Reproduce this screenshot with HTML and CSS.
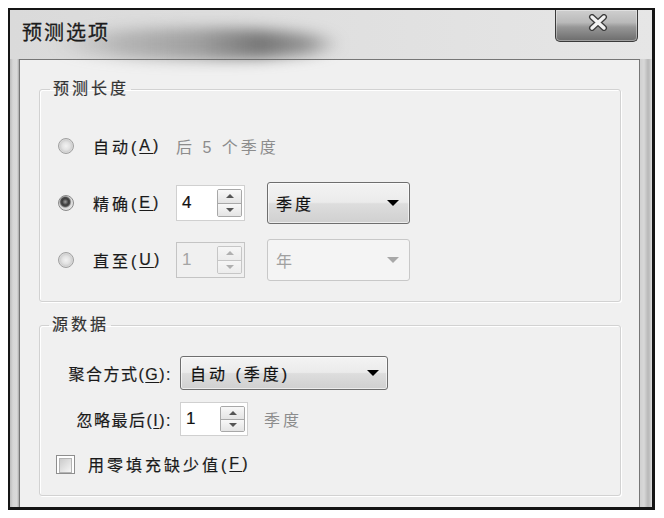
FILE: index.html
```html
<!DOCTYPE html>
<html lang="zh-CN">
<head>
<meta charset="utf-8">
<title>预测选项</title>
<link rel="stylesheet" href="styles.css">
</head>
<body>
<div class="window">
  <div class="titlebar">
    <span class="glow"></span>
    <span class="title">预测选项</span>
    <div class="close">
      <svg width="20" height="17" viewBox="0 0 20 17">
        <path d="M4 3 L16 14 M16 3 L4 14" stroke="#3c3c3c" stroke-width="6" stroke-linecap="round"/>
        <path d="M4 3 L16 14 M16 3 L4 14" stroke="#f2f2f2" stroke-width="3.4" stroke-linecap="round"/>
      </svg>
    </div>
  </div>
  <div class="frame">
    <div class="client">
      <fieldset class="group g1">
        <legend>预测长度</legend>
        <div class="rows">
          <div class="row">
            <label class="opt"><span class="radio"></span>自动(<u>A</u>)</label>
            <span class="hint">后 5 个季度</span>
          </div>
          <div class="row">
            <label class="opt"><span class="radio on"></span>精确(<u>E</u>)</label>
            <div class="spin s1">
              <span class="val">4</span>
              <span class="btns"><span class="up"></span><span class="dn"></span></span>
            </div>
            <div class="combo c1"><span class="ctext">季度</span><span class="arrow"></span></div>
          </div>
          <div class="row">
            <label class="opt"><span class="radio"></span>直至(<u>U</u>)</label>
            <div class="spin s1 off">
              <span class="val">1</span>
              <span class="btns"><span class="up"></span><span class="dn"></span></span>
            </div>
            <div class="combo c1 off"><span class="ctext">年</span><span class="arrow"></span></div>
          </div>
        </div>
      </fieldset>
      <fieldset class="group g2">
        <legend>源数据</legend>
        <div class="form">
          <label class="flabel">聚合方式(<u>G</u>):</label>
          <div class="combo c2"><span class="ctext">自动 (季度)</span><span class="arrow"></span></div>
          <label class="flabel">忽略最后(<u>I</u>):</label>
          <div class="spinwrap">
            <div class="spin s2">
              <span class="val">1</span>
              <span class="btns"><span class="up"></span><span class="dn"></span></span>
            </div>
            <span class="unit">季度</span>
          </div>
          <label class="checkrow"><span class="check"></span>用零填充缺少值(<u>F</u>)</label>
        </div>
      </fieldset>
    </div>
  </div>
</div>
</body>
</html>
```
FILE: styles.css
```css
* { box-sizing: border-box; }
html, body { background: #fff; }
body {
  margin: 8px;
  font-family: "Liberation Sans", "Noto Sans CJK SC", sans-serif;
  color: #1a1a1a;
  -webkit-text-stroke: 0.2px;
}
.window {
  width: 647px;
  height: 502px;
  border: solid #151515;
  border-width: 2px 3px 3px 2px;
  display: flex;
  flex-direction: column;
  background: linear-gradient(180deg, #e3e3e3 0, #dbdbdb 60px, #d9d9d9 100%);
  overflow: hidden;
}
.titlebar {
  height: 49px;
  flex: none;
  position: relative;
  display: flex;
  align-items: flex-start;
  padding-left: 12px;
  background: linear-gradient(90deg, #dadada 0%, #dedede 40%, #e6e6e6 100%);
}
.glow {
  position: absolute;
  left: 42px;
  top: 18px;
  width: 290px;
  height: 32px;
  border-radius: 50%;
  background: linear-gradient(90deg, rgba(120,120,120,0) 0%, rgba(120,120,120,.4) 25%, rgba(110,110,110,.55) 50%, rgba(100,100,100,.85) 72%, rgba(100,100,100,.6) 88%, rgba(100,100,100,0) 100%);
  filter: blur(7px);
}
.title {
  position: relative;
  font-size: 20px;
  line-height: 26px;
  letter-spacing: 2px;
  margin-top: 10px;
  color: #1c1c1c;
  -webkit-text-stroke: 0.3px;
}
.close {
  margin-left: auto;
  margin-right: 14px;
  width: 83px;
  height: 32px;
  border: 1px solid #3a3a3a;
  border-top: none;
  border-radius: 0 0 5px 5px;
  background: linear-gradient(180deg, #cfcfcf 0%, #b9b9b9 40%, #979797 55%, #6c6c6c 100%);
  box-shadow: inset 0 0 0 1px rgba(255,255,255,.35);
  display: flex;
  align-items: center;
  justify-content: center;
  padding: 0 0 7px 3px;
}
.close svg { display: block; }
.frame {
  flex: 1;
  display: flex;
  padding: 0 12px 0 9px;
  background:
    linear-gradient(90deg, #bcbcbc 0, #d6d6d6 3px, #dadada 7px, #a9a9a9 9px, transparent 9px) left top / 9px 100% no-repeat,
    linear-gradient(90deg, #d0d0d0 0, #d8d8d8 4px, #b8b8b8 8px, #c4c4c4 10px, #e0e0e0 12px) right top / 12px 100% no-repeat,
    #d9d9d9;
}
.client {
  flex: 1;
  background: #f0f0f0;
  border: 1px solid #767676;
  border-bottom: none;
  padding: 0 18px 0 19px;
}
.group {
  margin: 0;
  min-width: 0;
  border: 1px solid #d2d2d2;
  border-radius: 3px;
  box-shadow: inset 1px 1px 0 #fff, 1px 1px 0 #fff;
}
legend {
  font-size: 16px;
  line-height: 20px;
  letter-spacing: 3px;
  padding: 0 2px 0 3px;
  color: #333;
}
.g1 {
  margin-top: 19px;
  padding: 26px 18px 20px 18px;
}
.g1 legend { margin-left: -8px; }
.g2 {
  margin-top: 13px;
  padding: 21px 18px 19px 16px;
}
.g2 legend { margin-left: -7px; }

.rows {
  display: flex;
  flex-direction: column;
  gap: 15px;
}
.row {
  display: flex;
  align-items: center;
  height: 42px;
}
.opt {
  width: 118px;
  flex: none;
  display: flex;
  align-items: center;
  font-size: 16px;
  letter-spacing: 3px;
}
u { text-decoration: underline; text-underline-offset: 2px; }
.radio {
  flex: none;
  width: 16px;
  height: 16px;
  margin-right: 19px;
  border-radius: 50%;
  border: 1px solid #a0a0a0;
  background: radial-gradient(circle at 50% 50%, #f2f2f2 0, #e2e2e2 40%, #d2d2d2 58%, #f4f4f4 100%);
}
.radio.on {
  border-color: #8a8a8a;
  background: radial-gradient(circle at 45% 42%, #a0a0a0 0, #3e3e3e 28%, #4a4a4a 40%, #9a9a9a 48%, #dcdcdc 56%, #f2f2f2 100%);
}
.hint {
  font-size: 16px;
  letter-spacing: 3px;
  color: #8c8c8c;
  -webkit-text-stroke: 0;
}

/* spinner */
.spin {
  display: flex;
  align-items: stretch;
  background: #fff;
  border: 1px solid #d0d0d0;
  padding: 3px 2px 3px 0;
  color: #111;
}
.s1 { width: 69px; height: 36px; margin-right: 22px; }
.s2 { width: 68px; height: 34px; }
.val {
  flex: 1;
  display: flex;
  align-items: center;
  padding-left: 5px;
  font-size: 17px;
}
.btns {
  width: 25px;
  flex: none;
  display: flex;
  flex-direction: column;
  border: 1px solid #a8a8a8;
  border-radius: 2px;
  overflow: hidden;
}
.btns span {
  flex: 1;
  display: flex;
  align-items: center;
  justify-content: center;
  background: linear-gradient(180deg, #f8f8f8, #e4e4e4);
}
.btns span + span { border-top: 1px solid #a8a8a8; }
.btns .up::before {
  content: "";
  border-left: 4px solid transparent;
  border-right: 4px solid transparent;
  border-bottom: 4px solid #555;
}
.btns .dn::before {
  content: "";
  border-left: 4px solid transparent;
  border-right: 4px solid transparent;
  border-top: 4px solid #555;
}
.spin.off { background: #f0f0f0; border-color: #c4c4c4; color: #a4a4a4; -webkit-text-stroke: 0; }
.spin.off .btns { border-color: #c6c6c6; }
.spin.off .btns span { background: linear-gradient(180deg, #f6f6f6, #ececec); }
.spin.off .btns span + span { border-top-color: #c6c6c6; }
.spin.off .up::before { border-bottom-color: #b0b0b0; }
.spin.off .dn::before { border-top-color: #b0b0b0; }

/* combo */
.combo {
  display: flex;
  align-items: center;
  justify-content: space-between;
  border: 1px solid #6e6e6e;
  border-radius: 3px;
  background: linear-gradient(180deg, #f3f3f3 0%, #ebebeb 48%, #dddddd 52%, #d0d0d0 100%);
  box-shadow: inset 0 0 0 1px rgba(255,255,255,.6);
  font-size: 16px;
  letter-spacing: 3px;
  color: #111;
}
.c1 { width: 143px; height: 42px; padding: 0 10px 0 8px; }
.c2 { width: 208px; height: 34px; padding: 0 8px 0 9px; }
.arrow {
  width: 0;
  height: 0;
  border-left: 6px solid transparent;
  border-right: 6px solid transparent;
  border-top: 6px solid #000;
}
.combo.off {
  border-color: #c8c8c8;
  background: #f4f4f4;
  box-shadow: none;
  color: #a0a0a0;
  -webkit-text-stroke: 0;
}
.combo.off .arrow { border-top-color: #a8a8a8; }

/* group 2 form */
.form {
  display: grid;
  grid-template-columns: 116px auto;
  column-gap: 8px;
  row-gap: 12px;
  align-items: center;
  justify-items: start;
}
.flabel {
  justify-self: end;
  font-size: 16px;
  letter-spacing: 1.5px;
  white-space: nowrap;
}
.spinwrap {
  display: flex;
  align-items: center;
}
.unit {
  margin-left: 16px;
  font-size: 16px;
  letter-spacing: 3px;
  color: #8c8c8c;
  -webkit-text-stroke: 0;
}
.checkrow {
  grid-column: 1 / -1;
  margin-top: 4px;
  height: 24px;
  display: flex;
  align-items: center;
  font-size: 16px;
  letter-spacing: 3px;
}
.check {
  flex: none;
  width: 19px;
  height: 19px;
  margin-right: 13px;
  border: 1px solid #8e8e8e;
  background: #fff;
  padding: 2px;
}
.check::before {
  content: "";
  display: block;
  height: 100%;
  border: 1px solid #b4b4b4;
  background: linear-gradient(135deg, #cbcbcb, #f6f6f6);
}
```
